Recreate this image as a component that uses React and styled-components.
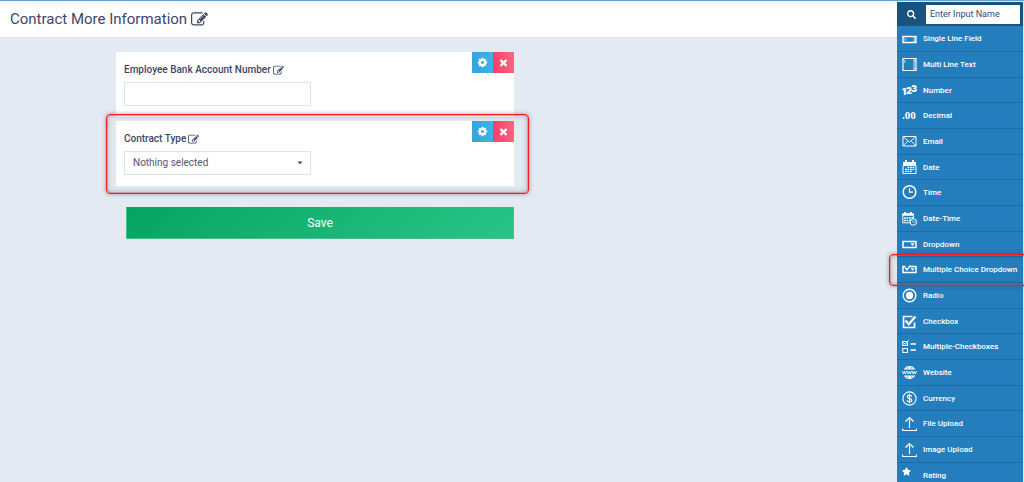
import React from "react";
import styled, { createGlobalStyle } from "styled-components";
import { FaSearch, FaStar } from "react-icons/fa";

const PencilIcon = () => (
  <svg viewBox="0 0 1792 1792" fill="currentColor" aria-hidden="true">
    <path d="M888 1184l116-116-152-152-116 116v56h96v96h56zm440-720q-16-16-33 1l-350 350q-17 17-1 33t33-1l350-350q17-17 1-33zm80 594v190q0 119-84.5 203.5t-203.5 84.5h-832q-119 0-203.5-84.5t-84.5-203.5v-832q0-119 84.5-203.5t203.5-84.5h832q63 0 117 25 15 7 18 23 3 17-9 29l-49 49q-14 14-32 8-23-6-45-6h-832q-66 0-113 47t-47 113v832q0 66 47 113t113 47h832q66 0 113-47t47-113v-126q0-13 9-22l64-64q15-15 35-7t20 29zm-96-738l288 288-672 672h-288v-288zm444 132l-92 92-288-288 92-92q28-28 68-28t68 28l152 152q28 28 28 68t-28 68z" />
  </svg>
);

const CogIcon = () => (
  <svg viewBox="0 0 1792 1792" fill="currentColor" aria-hidden="true">
    <path d="M1152 896q0-106-75-181t-181-75-181 75-75 181 75 181 181 75 181-75 75-181zm512-109v222q0 12-8 23t-20 13l-185 28q-19 54-39 91 35 50 107 138 10 12 10 25t-9 23q-27 37-99 108t-94 71q-12 0-26-9l-138-108q-44 23-91 38-16 136-29 186-7 28-36 28h-222q-14 0-24.5-8.5t-11.5-21.5l-28-184q-49-16-90-37l-141 107q-10 9-25 9-14 0-25-11-126-114-165-168-7-10-7-23 0-12 8-23 15-21 51-66.5t54-70.5q-27-50-41-99l-183-27q-13-2-21-12.5t-8-23.5v-222q0-12 8-23t19-13l186-28q14-46 39-92-40-57-107-138-10-12-10-24 0-10 9-23 26-36 98.5-107.5t94.5-71.5q13 0 26 10l138 107q44-23 91-38 16-136 29-186 7-28 36-28h222q14 0 24.5 8.5t11.5 21.5l28 184q49 16 90 37l142-107q9-9 24-9 13 0 25 10 129 119 165 170 7 8 7 22 0 12-8 23-15 21-51 66.5t-54 70.5q26 50 41 98l183 28q13 2 21 12.5t8 23.5z" />
  </svg>
);

const TimesIcon = () => (
  <svg viewBox="0 0 1792 1792" fill="currentColor" aria-hidden="true">
    <path d="M1490 1322q0 40-28 68l-136 136q-28 28-68 28t-68-28l-294-294-294 294q-28 28-68 28t-68-28l-136-136q-28-28-28-68t28-68l294-294-294-294q-28-28-28-68t28-68l136-136q28-28 68-28t68 28l294 294 294-294q28-28 68-28t68 28l136 136q28 28 28 68t-28 68l-294 294 294 294q28 28 28 68z" />
  </svg>
);

const UploadIcon = () => (
  <>
    <path d="M7.5 12V2M3.5 5.5l4-4 4 4" strokeWidth="1.2" />
    <path d="M.6 12.5v2h13.8v-2" strokeWidth="1.1" />
  </>
);

const fieldTypes = [
  {
    name: "Single Line Field",
    icon: (
      <>
        <path d="M1 5.5h13v6H1z" strokeWidth="1.4" />
        <path d="M3.2 7.2v2.6M12.2 6v5" strokeWidth=".8" />
      </>
    ),
  },
  {
    name: "Multi Line Text",
    icon: (
      <>
        <path d="M1 1.5h13v12H1z" strokeWidth="1.2" />
        <path d="M12 1.5v12M2.8 3.2v2.6" strokeWidth=".8" />
        <path d="M12 4h2M12 11.5h2" strokeWidth=".6" />
      </>
    ),
  },
  {
    name: "Number",
    icon: (
      <g fill="#fff" stroke="none" fontFamily="Inter, sans-serif" fontWeight="900">
        <text x="0" y="12" fontSize="9">1</text>
        <text x="4" y="11" fontSize="9">2</text>
        <text x="9" y="9" fontSize="9">3</text>
      </g>
    ),
  },
  {
    name: "Decimal",
    icon: (
      <text x="0" y="11" fill="#fff" stroke="none" fontFamily="Liberation Serif, serif" fontWeight="700" fontSize="11">
        .00
      </text>
    ),
  },
  {
    name: "Email",
    icon: (
      <>
        <path d="M1 2.5h13v9.500H1z" />
        <path d="M1.5 3l6 5 6-5M1.5 11.5l4.2-4.4M13.5 11.5L9.3 7.1" strokeWidth=".9" />
      </>
    ),
  },
  {
    name: "Date",
    icon: (
      <>
        <path d="M1 5.500h13v8H1z" />
        <path d="M1 2h13v3H1zM3 0h2v3H3zM10 0h2v3h-2z" fill="#fff" stroke="none" />
        <path d="M5.500 7.300h7.500M3 9.300h10M3 11.300h7.500" strokeWidth="1.3" strokeDasharray="1.8 .7" />
      </>
    ),
  },
  {
    name: "Time",
    icon: (
      <>
        <circle cx="7.5" cy="7" r="6.300" strokeWidth="1.5" />
        <path d="M7.500 3v4.200h3.600" strokeWidth="1.200" />
      </>
    ),
  },
  {
    name: "Date-Time",
    icon: (
      <>
        <path d="M.8 2.8h10.6v9H.8z" />
        <path d="M.5 2.5h11v2.3H.5zM2.3 1h1.8v2H2.3zM8 1h1.8v2H8z" fill="#fff" stroke="none" />
        <path d="M2 7h9M2 9.5h6" strokeWidth="1.4" strokeDasharray="1.8 .7" />
        <circle cx="11.3" cy="11" r="3.2" fill="#247dbd" />
        <path d="M9.9 9.6l1.4 1.4h1.5" strokeWidth=".8" />
      </>
    ),
  },
  {
    name: "Dropdown",
    icon: (
      <>
        <path d="M1 4.500h13v6H1z" strokeWidth="1.500" />
        <path d="M8.500 6.200h4.200L10.600 9z" fill="#fff" stroke="none" />
      </>
    ),
  },
  {
    name: "Multiple Choice Dropdown",
    marked: true,
    icon: (
      <>
        <path d="M3.500 4.500H1v6h13v-6H7.800" strokeWidth="1.500" />
        <path d="M3 5.500l2 2.500 3.200-4.500" strokeWidth="1.300" />
        <path d="M8.500 6.200h4.200L10.600 9z" fill="#fff" stroke="none" />
      </>
    ),
  },
  {
    name: "Radio",
    icon: (
      <>
        <circle cx="7.5" cy="7.5" r="6.3" strokeWidth="1.400" />
        <circle cx="7.5" cy="7.5" r="3.7" fill="#fff" stroke="none" />
      </>
    ),
  },
  {
    name: "Checkbox",
    icon: (
      <>
        <path d="M12.500 8.500v5H1.500v-11h9" strokeWidth="1.700" />
        <path d="M3.500 6.500l3.300 3.700 6.700-7.700" strokeWidth="2.400" />
      </>
    ),
  },
  {
    name: "Multiple-Checkboxes",
    icon: (
      <>
        <path d="M.8 2.500h4.700v4H.8zM.8 9.500h4.700v4H.8z" strokeWidth="1.100" />
        <path d="M1.800 3.800l1.500 1.600L6.500 1.200" strokeWidth=".9" />
        <path d="M8.500 5H14M8.500 11H14" strokeWidth="1.600" />
      </>
    ),
  },
  {
    name: "Website",
    icon: (
      <>
        <path d="M1.800 4.500a6.500 6.500 0 0 1 11.400 0zM1.800 10.500a6.500 6.500 0 0 0 11.400 0z" fill="#fff" stroke="none" />
        <path d="M4.500 3h2M8.500 3h2M4.500 12h2M8.500 12h2" stroke="#247dbd" strokeWidth=".7" />
        <path d="M.4 6l1.100 3 1-2.500 1 2.500 1.100-3M5.300 6l1.100 3 1-2.500 1 2.500 1.100-3M10.200 6l1.100 3 1-2.500 1 2.500 1.100-3" strokeWidth=".9" />
      </>
    ),
  },
  {
    name: "Currency",
    icon: (
      <>
        <circle cx="7.5" cy="7.5" r="6.600" strokeWidth="1.100" />
        <path d="M9.700 5.600c-.2-1-1-1.500-2.200-1.500-1.300 0-2.200.6-2.200 1.600 0 2.300 4.500 1.200 4.500 3.600 0 1-.9 1.600-2.300 1.600-1.300 0-2.200-.6-2.400-1.600M7.500 2.800v9.400" strokeWidth="1.200" />
      </>
    ),
  },
  { name: "File Upload", icon: <UploadIcon /> },
  { name: "Image Upload", icon: <UploadIcon /> },
  { name: "Rating", star: true },
];

const Actions = () => (
  <ActionGroup>
    <ActionButton type="button" aria-label="Settings" $from="#36a3dd" $to="#3bb4e5">
      <CogIcon />
    </ActionButton>
    <ActionButton type="button" aria-label="Remove" $from="#f93f67" $to="#fb6482">
      <TimesIcon />
    </ActionButton>
  </ActionGroup>
);

const App = () => {
  return (
    <React.Fragment>
      <GlobalStyle />
      <Page>
        <Main>
          <Header>
            <h1>Contract More Information</h1>
            <EditButton type="button" aria-label="Edit title" $size={17}>
              <PencilIcon />
            </EditButton>
          </Header>
          <Form onSubmit={(e) => e.preventDefault()}>
            <Card>
              <Field>
                <LabelRow>
                  <label htmlFor="account">Employee Bank Account Number</label>
                  <EditButton type="button" aria-label="Edit label" $size={11}>
                    <PencilIcon />
                  </EditButton>
                </LabelRow>
                <TextInput id="account" type="text" />
              </Field>
              <Actions />
            </Card>
            <Card>
              <Field>
                <LabelRow>
                  <label htmlFor="contractType">Contract Type</label>
                  <EditButton type="button" aria-label="Edit label" $size={11}>
                    <PencilIcon />
                  </EditButton>
                </LabelRow>
                <SelectWrap>
                  <select id="contractType">
                    <option>Nothing selected</option>
                  </select>
                  <svg viewBox="0 0 6 4" aria-hidden="true">
                    <path d="M.5 .5h5L3 3.300z" fill="#3f4567" />
                  </svg>
                </SelectWrap>
              </Field>
              <Actions />
              <CardMark />
            </Card>
            <SaveButton type="submit">Save</SaveButton>
          </Form>
        </Main>
        <Sidebar>
          <Search>
            <label htmlFor="inputName" aria-label="Search inputs">
              <FaSearch size={9} />
            </label>
            <input id="inputName" type="text" placeholder="Enter Input Name" />
          </Search>
          <TypeList>
            {fieldTypes.map((type) => (
              <TypeItem key={type.name}>
                <TypeButton type="button">
                  {type.star ? (
                    <StarIcon />
                  ) : (
                    <svg viewBox="0 0 15 15" fill="none" stroke="#fff" aria-hidden="true">
                      {type.icon}
                    </svg>
                  )}
                  {type.name}
                </TypeButton>
                {type.marked && <ItemMark />}
              </TypeItem>
            ))}
          </TypeList>
        </Sidebar>
      </Page>
    </React.Fragment>
  );
};

export default App;

const GlobalStyle = createGlobalStyle`
  * {
    box-sizing: border-box;
  }
  body {
    margin: 0;
    background: #e4eaf2;
    color: #3f4567;
    font-family: Roboto, "Liberation Sans", sans-serif;
  }
  button, input, select {
    font-family: inherit;
    color: inherit;
  }
`;

const Page = styled.div`
  display: flex;
  height: 100vh;
  overflow: hidden;
  border-top: 1px solid #65a1cd;
`;

const Main = styled.main`
  flex: 1;
  min-width: 0;
`;

const Header = styled.header`
  display: flex;
  align-items: center;
  gap: 4px;
  height: 37px;
  padding: 0 10px;
  border-bottom: 1px solid #dde3ea;
  background: linear-gradient(#f7f7f9, #fff 8px);
  h1 {
    margin: 0;
    font-size: 15px;
    line-height: 18px;
    font-weight: 400;
  }
`;

const EditButton = styled.button`
  display: flex;
  padding: 0;
  border: 0;
  background: none;
  cursor: pointer;
  svg {
    width: ${(props) => props.$size}px;
    height: ${(props) => props.$size}px;
  }
`;

const Form = styled.form`
  display: flex;
  flex-direction: column;
  gap: 4px;
  max-width: 398px;
  margin: 14px 0 0 116px;
`;

const Card = styled.section`
  position: relative;
  display: flex;
  justify-content: space-between;
  align-items: flex-start;
  background: #fff;
`;

const Field = styled.div`
  display: flex;
  flex-direction: column;
  gap: 6px;
  padding: 12px 0 11px 8px;
  width: 195px;
`;

const LabelRow = styled.div`
  display: flex;
  align-items: center;
  gap: 2px;
  font-size: 10px;
  line-height: 12px;
  font-weight: 500;
`;

const TextInput = styled.input`
  width: 100%;
  height: 24px;
  padding: 0 8px;
  border: 1px solid #dde5e8;
  background: #fff;
  font-size: 10px;
`;

const SelectWrap = styled.div`
  position: relative;
  select {
    display: block;
    width: 100%;
    height: 24px;
    padding: 0 8px 1px;
    border: 1px solid #dde5e8;
    border-radius: 0;
    background: #fff;
    appearance: none;
    font-size: 10px;
    color: #53586f;
  }
  svg {
    position: absolute;
    right: 8px;
    top: 10px;
    width: 6px;
    height: 4px;
    pointer-events: none;
  }
`;

const ActionGroup = styled.div`
  display: flex;
`;

const ActionButton = styled.button`
  display: flex;
  align-items: center;
  justify-content: center;
  width: 21px;
  height: 21px;
  padding: 0;
  border: 0;
  color: #fff;
  background: linear-gradient(90deg, ${(props) => props.$from}, ${(props) => props.$to});
  cursor: pointer;
  svg {
    width: 11px;
    height: 11px;
  }
`;

const Mark = styled.span`
  position: absolute;
  border: 1px solid #fb1a22;
  border-radius: 4px;
  box-shadow: inset 0 0 0 1px rgba(251, 60, 66, 0.35), 0 0 4px rgba(60, 70, 90, 0.5),
    inset 0 0 6px rgba(60, 70, 90, 0.4);
  pointer-events: none;
`;

const CardMark = styled(Mark)`
  inset: -7px -15px -8px -10px;
`;

const ItemMark = styled(Mark)`
  inset: -3px -8px -4px -8px;
  z-index: 1;
`;

const SaveButton = styled.button`
  height: 32px;
  margin: 17px 0 0 10px;
  border: 1px solid #47bd8a;
  border-top: 0;
  background: linear-gradient(135deg, #06a463, #29c487);
  color: #fff;
  font-size: 12px;
  cursor: pointer;
`;

const Sidebar = styled.aside`
  flex: none;
  width: 126px;
  margin: 1px 1px 0 0;
  background: #247dbd;
  color: #fff;
`;

const Search = styled.div`
  display: flex;
  align-items: center;
  height: 24px;
  padding: 0 3px 0 0;
  background: #19527e;
  label {
    display: flex;
    justify-content: center;
    width: 29px;
  }
  input {
    flex: 1;
    min-width: 0;
    height: 19px;
    padding: 0 4px;
    border: 0;
    background: #fff;
    color: #19527e;
    font-size: 9px;
    &::placeholder {
      color: #19527e;
      opacity: 1;
    }
  }
`;

const TypeList = styled.ul`
  display: grid;
  grid-auto-rows: 26px 26px 25px;
  margin: 0;
  padding: 0;
  list-style: none;
`;

const TypeItem = styled.li`
  position: relative;
  border-bottom: 1px solid #1d6ba5;
`;

const TypeButton = styled.button`
  display: flex;
  align-items: center;
  gap: 6px;
  width: 100%;
  height: 100%;
  padding: 0 0 0 5px;
  border: 0;
  background: none;
  color: #fff;
  font-size: 8px;
  font-weight: 500;
  white-space: nowrap;
  cursor: pointer;
  svg {
    flex: none;
    width: 15px;
    height: 15px;
  }
`;

const StarIcon = styled(FaStar)`
  align-self: flex-start;
  padding: 4px 6px 2px 0;
`;
